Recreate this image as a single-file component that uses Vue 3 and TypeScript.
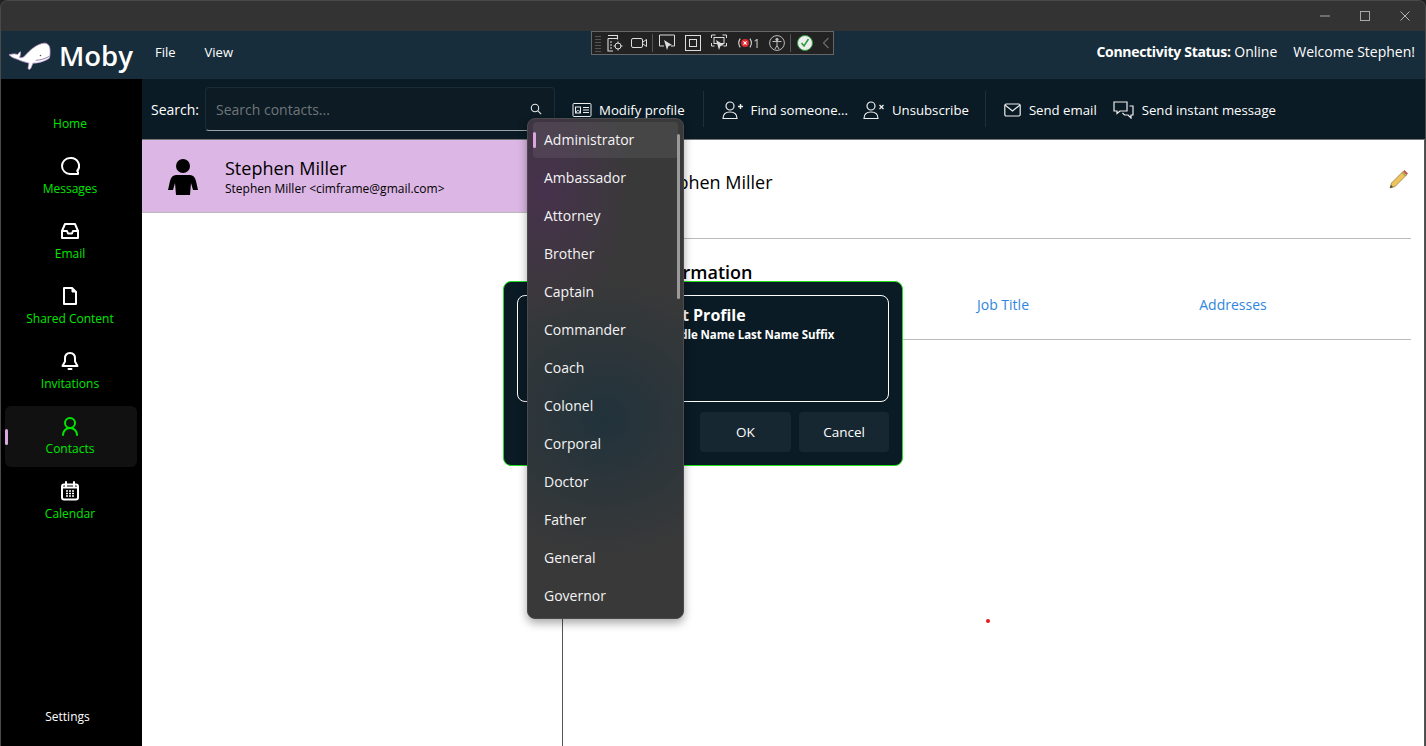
<script setup lang="ts">
import { ref } from 'vue';

type NavItem = { label: string; icon?: string; active?: boolean };

const navItems: NavItem[] = [
    { label: 'Home' },
    { label: 'Messages', icon: 'messages' },
    { label: 'Email', icon: 'email' },
    { label: 'Shared Content', icon: 'file' },
    { label: 'Invitations', icon: 'bell' },
    { label: 'Contacts', icon: 'person', active: true },
    { label: 'Calendar', icon: 'calendar' },
];

const titles = [
    'Administrator', 'Ambassador', 'Attorney', 'Brother', 'Captain', 'Commander', 'Coach',
    'Colonel', 'Corporal', 'Doctor', 'Father', 'General', 'Governor',
];

const selected = ref('Administrator');
const search = ref('');
</script>

<template>
    <div class="window">
        <div class="titlebar">
            <svg width="12" height="12" viewBox="0 0 12 12"><path d="M1 6h10" stroke="#a8a8a8" /></svg>
            <svg width="12" height="12" viewBox="0 0 12 12"><rect x="1.5" y="1.5" width="9" height="9" fill="none" stroke="#a8a8a8" /></svg>
            <svg width="12" height="12" viewBox="0 0 12 12"><path d="M1.5 1.5l9 9M10.5 1.5l-9 9" stroke="#b4b4b4" /></svg>
        </div>

        <header class="appbar">
            <div class="brand">
                <svg class="whale" width="42" height="29" viewBox="0 0 44 30">
                    <path d="M1 13c3-1 6-1 8 0 1-1 2-3 3-3 0 2 0 4-1 6 2 1 4 0 6-2C22 8 29 2 37 1c4 0 6 3 6 8 0 3 0 6-1 8-5 3-11 5-17 5l-2 5c-1 2-3 2-3 0l1-5c-4-1-8-2-12-4-3-1-7-2-9-5z" fill="#fff" stroke="#c9a0dc" stroke-width=".8" />
                    <path d="M28 19c5 0 10-2 14-4" fill="none" stroke="#8a7ca8" stroke-width="1" />
                    <circle cx="33" cy="14" r=".8" fill="#555" />
                </svg>
                <span class="brand-name">Moby</span>
            </div>
            <nav class="menu">
                <span>File</span>
                <span>View</span>
            </nav>
            <div class="status">
                <span><b>Connectivity Status:</b> Online</span>
                <span>Welcome Stephen!</span>
            </div>
        </header>

        <div class="content">
            <aside class="sidebar">
                <div class="nav-list">
                    <div v-for="item in navItems" :key="item.label" class="nav-item" :class="{ active: item.active }">
                        <span v-if="item.active" class="nav-mark"></span>
                        <svg class="nav-icon" width="20" height="20" viewBox="0 0 20 20" fill="none" stroke="currentColor" stroke-width="2" stroke-linejoin="round" stroke-linecap="round">
                            <template v-if="item.icon === 'messages'">
                                <path d="M10 2a8 8 0 1 0 0 16h8v-2l-.8-1A8 8 0 0 0 10 2z" />
                            </template>
                            <template v-else-if="item.icon === 'email'">
                                <path d="M5 3h10l3 7v7H2v-7z" />
                                <path d="M2 10h5l1 2.5h4l1-2.5h5" />
                            </template>
                            <template v-else-if="item.icon === 'file'">
                                <path d="M4 2h8l4 4v12H4z" />
                                <path d="M12 2v4h4" fill="currentColor" stroke-width="1" />
                            </template>
                            <template v-else-if="item.icon === 'bell'">
                                <path d="M10 2c-3.500 0-5 2.500-5 5.500v3L2.500 15h15L15 10.500v-3C15 4.500 13.500 2 10 2z" />
                                <path d="M8.500 18h3" />
                            </template>
                            <template v-else-if="item.icon === 'person'">
                                <circle cx="10" cy="7" r="5" />
                                <path d="M3 19c0-4 3-7 7-7s7 3 7 7" />
                            </template>
                            <template v-else-if="item.icon === 'calendar'">
                                <rect x="2" y="3.500" width="16" height="15" rx="2" />
                                <path d="M6 1v4M14 1v4M2 6.500h16" />
                                <path d="M6 10h8M6 12.500h8M6 15h8" stroke-width="1.600" stroke-dasharray="2 1" stroke-linecap="butt" />
                            </template>
                        </svg>
                        <span class="nav-label">{{ item.label }}</span>
                    </div>
                </div>
                <div class="settings">Settings</div>
            </aside>

            <main class="main">
                <div class="toolbar">
                    <label class="search-label">Search:</label>
                    <div class="search-box">
                        <input v-model="search" type="text" placeholder="Search contacts..." />
                        <svg width="12" height="12" viewBox="0 0 12 12" fill="none" stroke="#e8e8e8" stroke-width="1.100"><circle cx="5" cy="5" r="3.700" /><path d="M7.800 7.800l3.400 3.400" /></svg>
                    </div>
                    <button class="tool first">
                        <svg width="20" height="16" viewBox="0 0 20 16" fill="none" stroke="#eee"><rect x="1" y="1.500" width="18" height="13" rx="1" /><rect x="3.500" y="5" width="5" height="6" /><path d="M4 11c0-2 1-2.500 2-2.500S8 9 8 11M11 5.500h6M11 8h6M11 10.500h6" /></svg>
                        Modify profile
                    </button>
                    <span class="sep"></span>
                    <button class="tool find">
                        <svg width="22" height="20" viewBox="0 0 22 20" fill="none" stroke="#eee" stroke-width="1.200"><circle cx="8" cy="6" r="4" /><path d="M1 18.500c0-4.500 3-6.500 7-6.500s7 2 7 6.500z" /><path d="M16 6.500h5M18.500 4v5" stroke-width="1.400" /></svg>
                        Find someone...
                    </button>
                    <button class="tool unsub">
                        <svg width="21" height="20" viewBox="0 0 21 20" fill="none" stroke="#eee" stroke-width="1.200"><circle cx="8" cy="6" r="4" /><path d="M1 18.500c0-4.500 3-6.500 7-6.500s7 2 7 6.500z" /><path d="M16.500 5l4 4M20.500 5l-4 4" stroke-width="1.300" /></svg>
                        Unsubscribe
                    </button>
                    <span class="sep sep2"></span>
                    <button class="tool mail">
                        <svg width="17" height="14" viewBox="0 0 17 14" fill="none" stroke="#eee" stroke-width="1.200"><rect x=".8" y="1" width="15.400" height="12" rx="1.500" /><path d="M1 2l7.500 6L16 2" /></svg>
                        Send email
                    </button>
                    <button class="tool chat">
                        <svg width="21" height="18" viewBox="0 0 21 18" fill="none" stroke="#eee" stroke-width="1.200"><path d="M1 1h13v9H7l-3 2.500V10H1z" /><path d="M16.500 5H20v9h-2v3l-3-3h-3.500l-2-2" /></svg>
                        Send instant message
                    </button>
                </div>

                <div class="panes">
                    <section class="list-pane">
                        <div class="contact-row">
                            <svg width="30" height="37" viewBox="0 0 30 37" fill="#000"><circle cx="15" cy="8" r="7" /><path d="M8 17h14c3 0 5 2 6 6l2 9h-5l-2-7-1 12H8L7 25l-2 7H0l2-9c1-4 3-6 6-6z" /></svg>
                            <div class="contact-text">
                                <div class="contact-name">Stephen Miller</div>
                                <div class="contact-mail">Stephen Miller &lt;cimframe@gmail.com&gt;</div>
                            </div>
                        </div>
                    </section>
                    <section class="detail-pane">
                        <div class="detail-head">
                            <span class="detail-name">Stephen Miller</span>
                            <svg width="20" height="20" viewBox="0 0 20 20">
                                <path d="M1 19l1.500-5L14 2.500l3.500 3.500L6 17.500z" fill="#edc45c" stroke="#8a7440" stroke-width=".7" />
                                <path d="M14 2.500L15.500 1 19 4.500 17.500 6z" fill="#c2564e" />
                                <path d="M13 3.500l3.500 3.500" stroke="#6f9a5a" stroke-width="1" />
                                <path d="M1 19l1-3 2 2z" fill="#444" />
                            </svg>
                        </div>
                        <div class="detail-info">
                            <h2>Contact Information</h2>
                            <div class="columns">
                                <a>Job Title</a>
                                <a>Addresses</a>
                            </div>
                        </div>
                    </section>
                </div>
            </main>
        </div>

        <div class="devbar">
            <span class="grip"></span>
            <svg width="16" height="18" viewBox="0 0 16 18" fill="none" stroke="#ddd"><path d="M1 1.500h10M1 4.500h10M1 4.500V17h5M10.500 1.500v4" stroke-width="1.100" /><circle cx="11" cy="12" r="3" /><path d="M11 7.500v2M11 14.500v2M6.500 12h2M13.500 12h2M3 8h2M3 11h2M3 14h2" /></svg>
            <svg class="dev-near" width="16" height="12" viewBox="0 0 16 12" fill="none" stroke="#ddd"><rect x=".5" y="1.500" width="11" height="9" rx="1.500" /><path d="M12 5l3.500-2.500v7L12 7" /></svg>
            <span class="dev-sep"></span>
            <svg width="16" height="18" viewBox="0 0 16 18" fill="none" stroke="#ddd"><path d="M5 12H.5V1h15v11H12" /><path d="M5 6l8 5-3.500 1-1.500 4z" fill="#ddd" stroke="none" /></svg>
            <svg width="16" height="16" viewBox="0 0 16 16" fill="none" stroke="#ddd"><rect x=".5" y=".5" width="15" height="15" /><rect x="4.500" y="4.500" width="7" height="7" /></svg>
            <svg width="16" height="18" viewBox="0 0 16 18" fill="none" stroke="#ddd"><path d="M.5 4V1h4M11.500 1h4v3M.5 9v3h3M15.500 9v3h-3" /><rect x="3" y="3.500" width="10" height="6" /><path d="M5 6l8 5-3.500 1-1.500 4z" fill="#ddd" stroke="none" /></svg>
            <span class="errors">
                <svg width="16" height="14" viewBox="0 0 16 14"><circle cx="8" cy="7" r="4.500" fill="#e8262c" /><path d="M6.200 5.200l3.600 3.600M9.800 5.200l-3.600 3.600" stroke="#fff" stroke-width="1.200" /><path d="M2.500 2c-2 3-2 7 0 10M13.500 2c2 3 2 7 0 10" fill="none" stroke="#ddd" stroke-width="1.200" /></svg>
                <span>1</span>
            </span>
            <svg class="dev-access" width="16" height="16" viewBox="0 0 16 16" fill="none" stroke="#bbb"><circle cx="8" cy="8" r="7.400" /><circle cx="8" cy="4.500" r="1.200" fill="#bbb" /><path d="M3.500 6.500h9M8 6.500v4M8 10.500l-2 3.500M8 10.500l2 3.500" /></svg>
            <span class="dev-sep"></span>
            <svg width="16" height="16" viewBox="0 0 16 16"><circle cx="8" cy="8" r="7.500" fill="#eee" stroke="#2f9c3f" /><path d="M4.500 8l2.500 3 4.500-7" fill="none" stroke="#2f9c3f" stroke-width="1.600" /></svg>
            <svg width="6" height="12" viewBox="0 0 6 12" fill="none" stroke="#666" stroke-width="1.400"><path d="M5.500 1L.5 6l5 5" /></svg>
        </div>

        <div class="dialog">
            <div class="dialog-body">
                <div class="dialog-title">Edit Profile</div>
                <div class="dialog-sub">Title First Name Middle Name Last Name Suffix</div>
            </div>
            <div class="dialog-actions">
                <button class="ok">OK</button>
                <button class="cancel">Cancel</button>
            </div>
        </div>

        <div class="dropdown">
            <div v-for="t in titles" :key="t" class="option" :class="{ selected: t === selected }">{{ t }}</div>
            <span class="scrollthumb"></span>
        </div>

        <span class="red-dot"></span>
    </div>
</template>

<style scoped>
.window {
    position: relative;
    width: 1426px;
    height: 746px;
    box-sizing: border-box;
    display: flex;
    flex-direction: column;
    overflow: hidden;
    border: 1px solid #4a4a4a;
    border-bottom-width: 0;
    border-radius: 8px 8px 0 0;
    background: #333;
    color: #fff;
    font-family: "Open Sans", "Noto Sans", sans-serif;
    font-size: 13px;
}
.titlebar {
    height: 30px;
    flex: none;
    display: flex;
    justify-content: flex-end;
    align-items: center;
    gap: 28px;
    padding: 0 14px 0 0;
    background: #333;
}
.appbar {
    height: 48px;
    flex: none;
    display: flex;
    align-items: center;
    background: #172d3b;
}
.brand {
    display: flex;
    align-items: center;
    gap: 8px;
    padding-left: 8px;
    width: 154px;
    box-sizing: border-box;
    padding-top: 2px;
}
.brand-name {
    font-size: 27.500px;
    font-weight: 600;
    line-height: 1;
}
.menu {
    display: flex;
    gap: 29px;
    font-size: 13px;
    padding-bottom: 6px;
}
.status {
    margin-left: auto;
    display: flex;
    gap: 16px;
    padding: 0 10px 7px 0;
    font-size: 14px;
}
.status b {
    font-weight: 700;
    letter-spacing: -0.3px;
}
.content {
    flex: 1;
    display: flex;
    min-height: 0;
}
.sidebar {
    width: 141px;
    flex: none;
    display: flex;
    flex-direction: column;
    background: #000;
}
.nav-list {
    padding: 2px 5px 0 4px;
    display: flex;
    flex-direction: column;
    gap: 4px;
}
.nav-item {
    position: relative;
    height: 61px;
    display: flex;
    flex-direction: column;
    align-items: center;
    justify-content: flex-end;
    padding: 0 2px 10px 0;
    box-sizing: border-box;
    border-radius: 6px;
    color: #00e600;
    font-size: 12px;
}
.nav-item.active {
    background: #111;
}
.nav-icon {
    color: #fff;
    margin-bottom: 5px;
}
.nav-item.active .nav-icon {
    color: #00e600;
}
.nav-mark {
    position: absolute;
    left: 0;
    top: 23px;
    width: 3px;
    height: 16px;
    border-radius: 2px;
    background: #d9a6e0;
}
.nav-label {
    line-height: 16px;
    white-space: nowrap;
}
.settings {
    margin-top: auto;
    padding: 0 8px 21px 0;
    text-align: center;
    font-size: 12px;
}
.main {
    flex: 1;
    min-width: 0;
    display: flex;
    flex-direction: column;
}
.toolbar {
    height: 60px;
    flex: none;
    display: flex;
    align-items: center;
    padding-left: 9px;
    background: #0a1b25;
    border-bottom: 1px solid #777;
}
.search-label {
    font-size: 14px;
    margin-right: 6px;
}
.search-box {
    width: 350px;
    height: 44px;
    box-sizing: border-box;
    display: flex;
    align-items: center;
    padding: 0 12px 0 10px;
    background: #0c1b24;
    border: 1px solid #1c2c36;
    border-bottom-color: #9aa3a8;
    border-radius: 4px;
}
.search-box input {
    flex: 1;
    min-width: 0;
    padding: 0;
    background: transparent;
    border: none;
    outline: none;
    color: #fff;
    font: inherit;
    font-size: 14px;
}
.search-box input::placeholder {
    color: #6f767b;
    opacity: 1;
}
.tool {
    display: flex;
    align-items: center;
    gap: 8px;
    padding: 1px 0 0;
    background: none;
    border: none;
    color: #fff;
    font-family: inherit;
    font-size: 13.200px;
    white-space: nowrap;
}
.first {
    margin-left: 17px;
    gap: 7px;
}
.sep {
    width: 1px;
    height: 36px;
    margin: 0 18px;
    background: #1e2f3a;
}
.find {
    margin-right: -1px;
    gap: 7px;
}
.unsub {
    margin-left: 16px;
}
.sep2 {
    margin-left: 16px;
}
.chat {
    margin-left: 16px;
}
.panes {
    flex: 1;
    min-height: 0;
    display: flex;
    background: #fff;
    color: #000;
}
.list-pane {
    width: 421px;
    flex: none;
    box-sizing: border-box;
    border-right: 1px solid #555;
}
.contact-row {
    height: 73px;
    box-sizing: border-box;
    display: flex;
    align-items: center;
    gap: 27px;
    padding-left: 26px;
    background: #dcb6e4;
    border-bottom: 1px solid #b9b9b9;
}
.contact-name {
    font-size: 18px;
    line-height: 24px;
}
.contact-mail {
    font-size: 12px;
    line-height: 16px;
    padding-top: 1px;
}
.detail-pane {
    flex: 1;
    min-width: 0;
    padding-right: 13px;
    border-right: 1px solid #555;
}
.detail-head {
    height: 99px;
    box-sizing: border-box;
    display: flex;
    justify-content: space-between;
    padding: 29px 2px 0 88px;
    border-bottom: 1px solid #bbb;
}
.detail-name {
    font-size: 18px;
    line-height: 26px;
}
.detail-info {
    height: 101px;
    box-sizing: border-box;
    border-bottom: 1px solid #bbb;
}
.detail-info h2 {
    margin: 0;
    padding: 20px 0 0 13px;
    font-size: 18px;
    font-weight: 600;
    line-height: 26px;
}
.columns {
    display: grid;
    grid-template-columns: 230px 230px;
    padding-left: 325px;
    margin-top: 10px;
    text-align: center;
    color: #2f86e0;
    font-size: 14px;
}
.devbar {
    position: absolute;
    left: 590px;
    top: 30px;
    width: 243px;
    height: 24px;
    box-sizing: border-box;
    display: flex;
    align-items: center;
    gap: 10px;
    padding-left: 3px;
    background: #222;
    border: 1px solid #666;
    color: #ccc;
    font-size: 12px;
}
.grip {
    width: 6px;
    height: 18px;
    margin-right: -4px;
    background: repeating-linear-gradient(0deg, #555 0 1px, transparent 1px 3px);
}
.dev-near {
    margin-left: -2px;
}
.dev-sep {
    width: 1px;
    height: 18px;
    margin: 0 -4px 0 -5px;
    background: #555;
}
.errors {
    display: flex;
    align-items: center;
    gap: 1px;
    margin-left: 1px;
    width: 22px;
}
.dev-access {
    margin-left: -1px;
}
.dialog {
    position: absolute;
    left: 502px;
    top: 280px;
    width: 400px;
    height: 185px;
    box-sizing: border-box;
    padding: 13px;
    background: #0a1b25;
    border: 1px solid #1fe01f;
    border-radius: 8px;
}
.dialog-body {
    height: 107px;
    box-sizing: border-box;
    padding: 9px 0 0 14px;
    border: 1px solid #fff;
    border-radius: 8px;
}
.dialog-title {
    font-size: 16px;
    font-weight: 700;
    line-height: 20px;
    padding-left: 126px;
}
.dialog-sub {
    font-size: 11.500px;
    font-weight: 700;
    letter-spacing: -0.05px;
    line-height: 20px;
    white-space: nowrap;
    padding-left: 33px;
}
.dialog-actions {
    display: flex;
    justify-content: flex-end;
    gap: 8px;
    margin-top: 10px;
}
.dialog-actions button {
    height: 40px;
    background: #172732;
    border: none;
    border-radius: 4px;
    color: #fff;
    font-family: inherit;
    font-size: 13.500px;
}
.ok {
    width: 91px;
}
.cancel {
    width: 90px;
}
.dropdown {
    position: absolute;
    left: 526px;
    top: 117px;
    width: 157px;
    height: 501px;
    box-sizing: border-box;
    padding: 3px 5px;
    overflow: hidden;
    border: 1px solid #4a4a4e;
    border-radius: 8px;
    box-shadow: 0 4px 10px rgba(0, 0, 0, 0.35);
    background:
        radial-gradient(ellipse 90px 130px at 10% 70px, rgba(80, 45, 90, 0.6), transparent),
        radial-gradient(ellipse 150px 140px at 50% 300px, rgba(25, 48, 60, 0.75), transparent),
        #393939;
}
.option {
    position: relative;
    height: 38px;
    line-height: 38px;
    padding-left: 11px;
    font-size: 14px;
    color: #f4f4f4;
    border-radius: 4px;
}
.option.selected {
    height: 36px;
    line-height: 36px;
    margin-bottom: 1px;
    background: rgba(255, 255, 255, 0.07);
}
.option.selected::before {
    content: "";
    position: absolute;
    left: 0;
    top: 10px;
    width: 3px;
    height: 16px;
    border-radius: 2px;
    background: #d9a6e0;
}
.scrollthumb {
    position: absolute;
    right: 3px;
    top: 15px;
    width: 3px;
    height: 165px;
    border-radius: 2px;
    background: #9a9a9a;
}
.red-dot {
    position: absolute;
    left: 985px;
    top: 618px;
    width: 4px;
    height: 4px;
    border-radius: 50%;
    background: #e81818;
}
</style>

<style>
html, body {
    margin: 0;
    background: #222;
}
</style>
